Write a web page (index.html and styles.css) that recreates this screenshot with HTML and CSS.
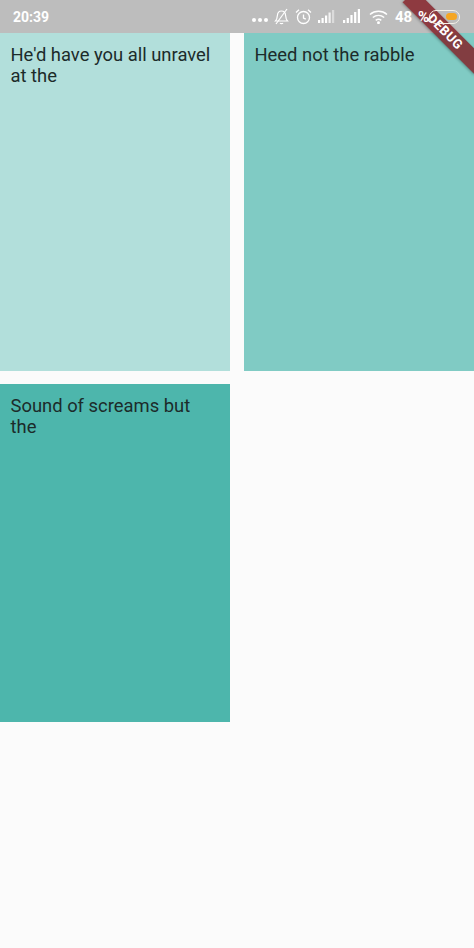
FILE: index.html
```html
<!DOCTYPE html>
<html lang="en">
<head>
    <meta charset="UTF-8">
    <meta name="viewport" content="width=device-width, initial-scale=1.0">
    <title>Grid</title>
    <link rel="stylesheet" href="styles.css">
</head>
<body>
    <div class="status-bar">
        <span class="clock">20:39</span>
        <div class="status-icons">
            <span class="dots"><i></i><i></i><i></i></span>
            <svg class="bell" width="15" height="17" viewBox="0 0 15 17" fill="none" stroke="#fff" stroke-width="1.2">
                <path d="M1.5 13c1.4-1.5 1.7-3 1.9-5.500C3.600 4.500 5.300 3 7.500 3s3.900 1.500 4.100 4.500c.2 2.500.5 4 1.900 5.500z"/>
                <path d="M6 15c.6.8 2.400.8 3 0"/>
                <path d="M2 16 13 1"/>
            </svg>
            <svg class="alarm" width="17" height="17" viewBox="0 0 17 17" fill="none" stroke="#fff" stroke-width="1.3">
                <circle cx="8.500" cy="9.500" r="6"/>
                <path d="M8.500 6.500v3.500l2.300 1.200"/>
                <path d="M1 4.500 4 1.800M16 4.500 13 1.800"/>
            </svg>
            <svg class="signal" width="17" height="14" viewBox="0 0 17 14" fill="#fff">
                <rect x="0" y="11" width="2.2" height="3"/>
                <rect x="3.500" y="9" width="2.2" height="5"/>
                <rect x="7" y="6.500" width="2.2" height="7.500"/>
                <rect x="10.500" y="3.500" width="2.2" height="10.500" opacity=".8"/>
                <rect x="14" y="1" width="2.2" height="13" opacity=".45"/>
            </svg>
            <svg class="signal second" width="18" height="14" viewBox="0 0 18 14" fill="#fff">
                <rect x="0" y="11" width="2.2" height="3"/>
                <rect x="3.700" y="9" width="2.2" height="5"/>
                <rect x="7.400" y="6" width="2.2" height="8"/>
                <rect x="11.100" y="3" width="2.2" height="11"/>
                <rect x="14.800" y="0" width="2.2" height="14"/>
            </svg>
            <svg class="wifi" width="19" height="14" viewBox="0 0 19 14" fill="none" stroke="#fff" stroke-width="1.5">
                <path d="M1 4.500c5-4.200 12-4.200 17 0"/>
                <path d="M3.800 7.500c3.400-2.800 8-2.800 11.400 0"/>
                <path d="M6.700 10.300c1.700-1.300 3.900-1.300 5.600 0"/>
                <circle cx="9.500" cy="12.700" r=".7" fill="#fff"/>
            </svg>
            <span class="percent">48 %</span>
            <span class="battery"><span class="battery-level"></span></span>
        </div>
    </div>

    <div class="grid">
        <div class="tile light">He'd have you all unravel at the</div>
        <div class="tile medium">Heed not the rabble</div>
        <div class="tile dark">Sound of screams but the</div>
    </div>

    <div class="debug-banner">DEBUG</div>
</body>
</html>
```

FILE: styles.css
```css
* {
    box-sizing: border-box;
}

html, body {
    margin: 0;
    height: 100%;
}

body {
    position: relative;
    width: 474px;
    height: 948px;
    overflow: hidden;
    font-family: Roboto, sans-serif;
    background-color: #fbfbfb;
}

.status-bar {
    display: flex;
    align-items: center;
    justify-content: space-between;
    height: 33px;
    padding: 0 14px 0 13px;
    background: #bdbdbd;
    color: white;
}

.clock {
    font-size: 14px;
    font-weight: 700;
}

/* icons stay readable through the debug banner */
.status-icons {
    position: relative;
    z-index: 2;
    display: flex;
    align-items: center;
    gap: 6px;
}

.dots {
    display: flex;
    gap: 2px;
    margin-top: 6px;
}

.dots i {
    width: 4px;
    height: 4px;
    border-radius: 50%;
    background: white;
}

.signal {
    margin-top: -1px;
}

.signal.second,
.wifi {
    margin-left: 2px;
}

.percent {
    margin-left: 1px;
    margin-right: -6px;
    font-size: 15px;
    font-weight: 700;
    word-spacing: 2px;
    white-space: nowrap;
}

.battery {
    display: block;
    width: 31px;
    height: 14px;
    padding: 2px;
    border: 1.5px solid #f4f0e8;
    border-radius: 7px;
}

.battery-level {
    display: block;
    width: 11px;
    height: 7px;
    margin-left: 14px;
    border-radius: 4px;
    background: #f5a623;
}

.grid {
    display: grid;
    grid-template-columns: 230px 230px;
    grid-auto-rows: 338px;
    column-gap: 14px;
    row-gap: 13px;
}

.tile {
    padding: 11px 10.5px;
    font-size: 18.4px;
    line-height: 21px;
    color: #1c2b2a;
}

.light {
    background: #b2dfdb;
}

.medium {
    background: #80cbc4;
}

.dark {
    background: #4db6ac;
}

.debug-banner {
    position: absolute;
    z-index: 1;
    top: 23px;
    left: 394px;
    width: 102px;
    height: 18px;
    transform: rotate(45deg);
    background: rgba(130, 25, 32, 0.8);
    box-shadow: 0 1px 3px rgba(0, 0, 0, 0.3);
    color: white;
    font-size: 13px;
    font-weight: 700;
    line-height: 18px;
    letter-spacing: 0.5px;
    text-align: center;
}
```
